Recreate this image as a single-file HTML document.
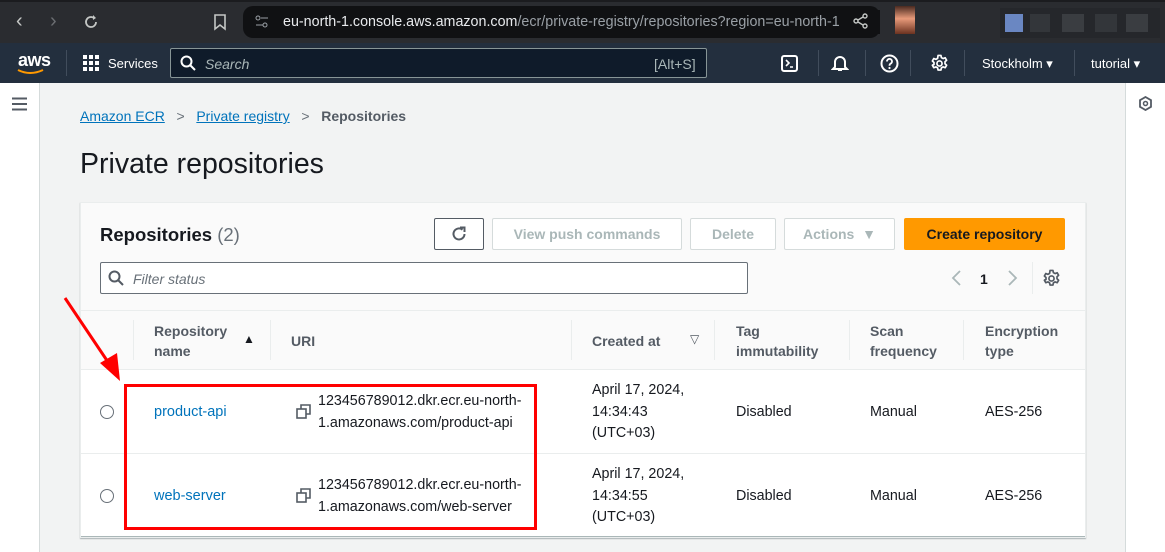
<!DOCTYPE html>
<html><head><meta charset="utf-8"><style>
*{box-sizing:border-box;margin:0;padding:0}
body{width:1165px;height:552px;overflow:hidden;background:#f2f3f3;font-family:"Liberation Sans",sans-serif;position:relative;color:#16191f}
.a{position:absolute}
.chrome{left:0;top:0;width:1165px;height:43px;background:#2a2c30;border-top:2px solid #1b1c1f}
.url{left:243px;top:6px;width:637px;height:32px;background:#101113;border-radius:10px;color:#e8eaed;font-size:14.3px;line-height:32px;padding-left:40px;white-space:nowrap;overflow:hidden}
.url span{color:#9aa0a6}
.nav{left:0;top:43px;width:1165px;height:40px;background:#232f3e;color:#fff;font-size:13px}
.sep{width:1px;height:26px;background:#414d5c;top:7px}
.th{font-weight:bold;color:#545b64;font-size:14px;line-height:20px}
.td{font-size:14.3px;color:#16191f;line-height:21.5px}
.btn{top:218px;height:32px;border:1px solid #d5dbdb;background:#fff;color:#aab7b8;font-weight:bold;font-size:14px;text-align:center;line-height:31px;border-radius:2px}
.link{color:#0073bb;font-size:14.5px}
.radio{width:14px;height:14px;border:1.5px solid #687078;border-radius:50%;left:100px;background:#fff}
</style></head><body>
<div class="a chrome"></div>
<div class="a" style="left:16px;top:10px;color:#c4c7c5;font-size:20px">&#8249;</div>
<div class="a" style="left:50px;top:10px;color:#6b6e72;font-size:20px">&#8250;</div>
<svg class="a" style="left:82px;top:13px" width="18" height="18" viewBox="0 0 18 18"><path d="M14 9a5 5 0 1 1-2-4" stroke="#c4c7c5" stroke-width="1.8" fill="none"/><path d="M11 2l3 3-3 2z" fill="#c4c7c5"/></svg>
<svg class="a" style="left:213px;top:13px" width="14" height="18"><path d="M2 2h10v14l-5-4-5 4z" stroke="#c4c7c5" stroke-width="1.6" fill="none"/></svg>
<div class="a url">eu-north-1.console.aws.amazon.com<span>/ecr/private-registry/repositories?region=eu-north-1</span></div>
<svg class="a" style="left:255px;top:15px" width="14" height="14"><circle cx="3" cy="3" r="2" stroke="#9aa0a6" fill="none"/><line x1="6" y1="3" x2="13" y2="3" stroke="#9aa0a6"/><circle cx="10" cy="10" r="2" stroke="#9aa0a6" fill="none"/><line x1="1" y1="10" x2="8" y2="10" stroke="#9aa0a6"/></svg>
<div class="a" style="left:850px;top:10px;width:30px;height:24px;background:#101113"></div>
<svg class="a" style="left:853px;top:13px" width="16" height="16"><circle cx="12" cy="3" r="2" stroke="#c4c7c5" fill="none" stroke-width="1.4"/><circle cx="3" cy="8" r="2" stroke="#c4c7c5" fill="none" stroke-width="1.4"/><circle cx="12" cy="13" r="2" stroke="#c4c7c5" fill="none" stroke-width="1.4"/><path d="M5 7l5-3M5 9l5 3" stroke="#c4c7c5" stroke-width="1.4"/></svg>
<div class="a" style="left:895px;top:6px;width:20px;height:28px;background:linear-gradient(#4a2a20,#e89a7a 45%,#6b3220)"></div>
<div class="a" style="left:1000px;top:8px;width:160px;height:30px;background:#25272b"></div>
<div class="a" style="left:1005px;top:14px;width:18px;height:18px;background:#6a87c2"></div>
<div class="a" style="left:1030px;top:14px;width:20px;height:18px;background:#33363a"></div>
<div class="a" style="left:1062px;top:14px;width:22px;height:18px;background:#3a3d41"></div>
<div class="a" style="left:1095px;top:14px;width:22px;height:18px;background:#33363a"></div>
<div class="a" style="left:1126px;top:14px;width:22px;height:18px;background:#3a3d41"></div>

<div class="a nav"></div>
<div class="a" style="left:18px;top:50px;color:#fff;font-size:18px;font-weight:bold;letter-spacing:-0.5px">aws</div>
<svg class="a" style="left:17px;top:68px" width="28" height="8"><path d="M1 2q12 6 25 0" stroke="#ff9900" stroke-width="2" fill="none"/></svg>
<div class="a sep" style="left:66px;top:50px"></div>
<svg class="a" style="left:83px;top:55px" width="17" height="17"><g fill="#fff"><rect x="0" y="0" width="4" height="4"/><rect x="6" y="0" width="4" height="4"/><rect x="12" y="0" width="4" height="4"/><rect x="0" y="6" width="4" height="4"/><rect x="6" y="6" width="4" height="4"/><rect x="12" y="6" width="4" height="4"/><rect x="0" y="12" width="4" height="4"/><rect x="6" y="12" width="4" height="4"/><rect x="12" y="12" width="4" height="4"/></g></svg>
<div class="a" style="left:108px;top:56px;color:#fff;font-size:13px">Services</div>
<div class="a" style="left:170px;top:48px;width:537px;height:30px;border:1px solid #879596;border-radius:2px;background:#0f1b2a"></div>
<svg class="a" style="left:180px;top:55px" width="16" height="16"><circle cx="6.5" cy="6.5" r="5" stroke="#fff" stroke-width="2" fill="none"/><line x1="10" y1="10" x2="15" y2="15" stroke="#fff" stroke-width="2"/></svg>
<div class="a" style="left:205px;top:56px;color:#aab7b8;font-size:14px;font-style:italic">Search</div>
<div class="a" style="left:654px;top:56px;color:#aab7b8;font-size:14px">[Alt+S]</div>
<svg class="a" style="left:781px;top:55px" width="17" height="17"><rect x="1" y="1" width="15" height="15" rx="2" stroke="#fff" stroke-width="2" fill="none"/><path d="M5 5l3 3-3 3M9 12h3" stroke="#fff" stroke-width="1.6" fill="none"/></svg>
<div class="a sep" style="left:818px;top:50px"></div>
<svg class="a" style="left:831px;top:54px" width="18" height="18"><path d="M4 13V8a5 5 0 0 1 10 0v5l2 2H2z M7 16h4" stroke="#fff" stroke-width="2" fill="none"/></svg>
<div class="a sep" style="left:865px;top:50px"></div>
<svg class="a" style="left:880px;top:54px" width="19" height="19"><circle cx="9.5" cy="9.5" r="8" stroke="#fff" stroke-width="2" fill="none"/><path d="M7 7.5a2.5 2.5 0 1 1 3.5 2.2c-1 .5-1 1-1 2" stroke="#fff" stroke-width="1.8" fill="none"/><circle cx="9.5" cy="14" r="1.1" fill="#fff"/></svg>
<div class="a sep" style="left:910px;top:50px"></div>
<svg class="a" style="left:930px;top:54px" width="19" height="19" viewBox="0 0 20 20"><path d="M8.5 1.5h3l.5 2.3 1.8 1 2.2-.8 1.5 2.6-1.7 1.6v2l1.7 1.6-1.5 2.6-2.2-.8-1.8 1-.5 2.3h-3l-.5-2.3-1.8-1-2.2.8-1.5-2.6L4.2 11V9L2.5 7.4 4 4.8l2.2.8 1.8-1z" stroke="#fff" stroke-width="1.8" fill="none" stroke-linejoin="round"/><circle cx="10" cy="10" r="2.7" stroke="#fff" stroke-width="1.8" fill="none"/></svg>
<div class="a sep" style="left:964px;top:50px"></div>
<div class="a" style="left:982px;top:56px;color:#fff;font-size:13px">Stockholm ▾</div>
<div class="a sep" style="left:1074px;top:50px"></div>
<div class="a" style="left:1091px;top:56px;color:#fff;font-size:13px">tutorial ▾</div>

<div class="a" style="left:0;top:83px;width:40px;height:469px;background:#fff;border-right:1px solid #d5dbdb"></div>
<svg class="a" style="left:12px;top:97px" width="16" height="14"><path d="M0 1.5h15M0 7h15M0 12.5h15" stroke="#545b64" stroke-width="2"/></svg>
<div class="a" style="left:1125px;top:83px;width:40px;height:469px;background:#fff;border-left:1px solid #d5dbdb"></div>
<svg class="a" style="left:1138px;top:96px" width="15" height="15"><path d="M7.5 1l5.5 3.2v6.6L7.5 14 2 10.8V4.2z" stroke="#545b64" stroke-width="1.8" fill="none"/><circle cx="7.5" cy="7.5" r="2" stroke="#545b64" stroke-width="1.5" fill="none"/></svg>

<div class="a" style="left:80px;top:108px;font-size:14px;color:#545b64;white-space:nowrap"><span class="link" style="text-decoration:underline;font-size:14px">Amazon ECR</span> &nbsp;&nbsp;<b style="font-weight:normal;color:#687078">&gt;</b>&nbsp;&nbsp; <span class="link" style="text-decoration:underline;font-size:14px">Private registry</span> &nbsp;&nbsp;<b style="font-weight:normal;color:#687078">&gt;</b>&nbsp;&nbsp; <b style="color:#545b64">Repositories</b></div>
<div class="a" style="left:80px;top:148px;font-size:28.5px;color:#16191f">Private repositories</div>

<div class="a" style="left:80px;top:202px;width:1006px;height:336px;background:#fafafa;border:1px solid #eaeded;box-shadow:0 1px 1px rgba(0,28,36,.3)"></div>
<div class="a" style="left:100px;top:224px;font-size:18.5px;font-weight:bold">Repositories <span style="font-weight:normal;color:#687078">(2)</span></div>
<div class="a btn" style="left:434px;width:50px;border-color:#545b64"></div>
<svg class="a" style="left:450px;top:225px" width="18" height="18"><path d="M14.5 9a5.5 5.5 0 1 1-2-4.3" stroke="#545b64" stroke-width="2" fill="none"/><path d="M10 2.5h4.5V7" stroke="#545b64" stroke-width="2" fill="none"/></svg>
<div class="a btn" style="left:492px;width:190px">View push commands</div>
<div class="a btn" style="left:690px;width:86px">Delete</div>
<div class="a btn" style="left:784px;width:111px">Actions &nbsp;▼</div>
<div class="a btn" style="left:904px;width:161px;background:#ff9900;border-color:#ff9900;color:#16191f">Create repository</div>
<div class="a" style="left:100px;top:262px;width:648px;height:32px;background:#fff;border:1px solid #687078;border-radius:2px"></div>
<svg class="a" style="left:108px;top:270px" width="16" height="16"><circle cx="6.5" cy="6.5" r="5" stroke="#545b64" stroke-width="2" fill="none"/><line x1="10" y1="10" x2="15" y2="15" stroke="#545b64" stroke-width="2"/></svg>
<div class="a" style="left:133px;top:271px;font-size:14px;font-style:italic;color:#687078">Filter status</div>
<svg class="a" style="left:951px;top:270px" width="12" height="16"><path d="M9 1L2 8l7 7" stroke="#aab7b8" stroke-width="1.8" fill="none"/></svg>
<div class="a" style="left:980px;top:271px;font-size:14px;font-weight:bold">1</div>
<svg class="a" style="left:1006px;top:270px" width="12" height="16"><path d="M3 1l7 7-7 7" stroke="#aab7b8" stroke-width="1.8" fill="none"/></svg>
<div class="a" style="left:1032px;top:262px;width:1px;height:32px;background:#eaeded"></div>
<svg class="a" style="left:1042px;top:269px" width="19" height="19" viewBox="0 0 20 20"><path d="M8.5 1.5h3l.5 2.3 1.8 1 2.2-.8 1.5 2.6-1.7 1.6v2l1.7 1.6-1.5 2.6-2.2-.8-1.8 1-.5 2.3h-3l-.5-2.3-1.8-1-2.2.8-1.5-2.6L4.2 11V9L2.5 7.4 4 4.8l2.2.8 1.8-1z" stroke="#545b64" stroke-width="1.8" fill="none" stroke-linejoin="round"/><circle cx="10" cy="10" r="2.7" stroke="#545b64" stroke-width="1.8" fill="none"/></svg>

<div class="a" style="left:81px;top:310px;width:1004px;height:1px;background:#eaeded"></div>
<div class="a" style="left:81px;top:369px;width:1004px;height:168px;background:#fff"></div>
<div class="a" style="left:81px;top:369px;width:1004px;height:1px;background:#eaeded"></div>
<div class="a" style="left:81px;top:453px;width:1004px;height:1px;background:#eaeded"></div>
<div class="a" style="left:81px;top:536px;width:1004px;height:1px;background:#aab7b8"></div>
<div class="a" style="left:133px;top:320px;width:1px;height:40px;background:#eaeded"></div>
<div class="a" style="left:270px;top:320px;width:1px;height:40px;background:#eaeded"></div>
<div class="a" style="left:571px;top:320px;width:1px;height:40px;background:#eaeded"></div>
<div class="a" style="left:714px;top:320px;width:1px;height:40px;background:#eaeded"></div>
<div class="a" style="left:849px;top:320px;width:1px;height:40px;background:#eaeded"></div>
<div class="a" style="left:963px;top:320px;width:1px;height:40px;background:#eaeded"></div>
<div class="a th" style="left:154px;top:321px">Repository<br>name</div>
<div class="a" style="left:243px;top:332px;font-size:12px">▲</div>
<div class="a th" style="left:291px;top:331px">URI</div>
<div class="a th" style="left:592px;top:331px">Created at</div>
<div class="a" style="left:690px;top:332px;font-size:12px;color:#545b64">▽</div>
<div class="a th" style="left:736px;top:321px">Tag<br>immutability</div>
<div class="a th" style="left:870px;top:321px">Scan<br>frequency</div>
<div class="a th" style="left:985px;top:321px">Encryption<br>type</div>

<div class="a radio" style="top:405px"></div>
<div class="a link" style="left:154px;top:404px">product-api</div>
<svg class="a" style="left:296px;top:404px" width="15" height="15"><rect x="1" y="5" width="9" height="9" stroke="#545b64" stroke-width="1.6" fill="none"/><path d="M5 5V1h9v9h-4" stroke="#545b64" stroke-width="1.6" fill="none"/></svg>
<div class="a td" style="left:318px;top:391px">123456789012.dkr.ecr.eu-north-<br>1.amazonaws.com/product-api</div>
<div class="a td" style="left:592px;top:380px">April 17, 2024,<br>14:34:43<br>(UTC+03)</div>
<div class="a td" style="left:736px;top:402px">Disabled</div>
<div class="a td" style="left:870px;top:402px">Manual</div>
<div class="a td" style="left:985px;top:402px">AES-256</div>

<div class="a radio" style="top:489px"></div>
<div class="a link" style="left:154px;top:488px">web-server</div>
<svg class="a" style="left:296px;top:488px" width="15" height="15"><rect x="1" y="5" width="9" height="9" stroke="#545b64" stroke-width="1.6" fill="none"/><path d="M5 5V1h9v9h-4" stroke="#545b64" stroke-width="1.6" fill="none"/></svg>
<div class="a td" style="left:318px;top:475px">123456789012.dkr.ecr.eu-north-<br>1.amazonaws.com/web-server</div>
<div class="a td" style="left:592px;top:464px">April 17, 2024,<br>14:34:55<br>(UTC+03)</div>
<div class="a td" style="left:736px;top:486px">Disabled</div>
<div class="a td" style="left:870px;top:486px">Manual</div>
<div class="a td" style="left:985px;top:486px">AES-256</div>

<div class="a" style="left:124px;top:384px;width:413px;height:146px;border:3px solid #f00"></div>
<svg class="a" style="left:60px;top:295px" width="70" height="90"><line x1="5" y1="3" x2="50" y2="70" stroke="#f00" stroke-width="3"/><path d="M40 68l20 18-3-28z" fill="#f00"/></svg>
</body></html>
